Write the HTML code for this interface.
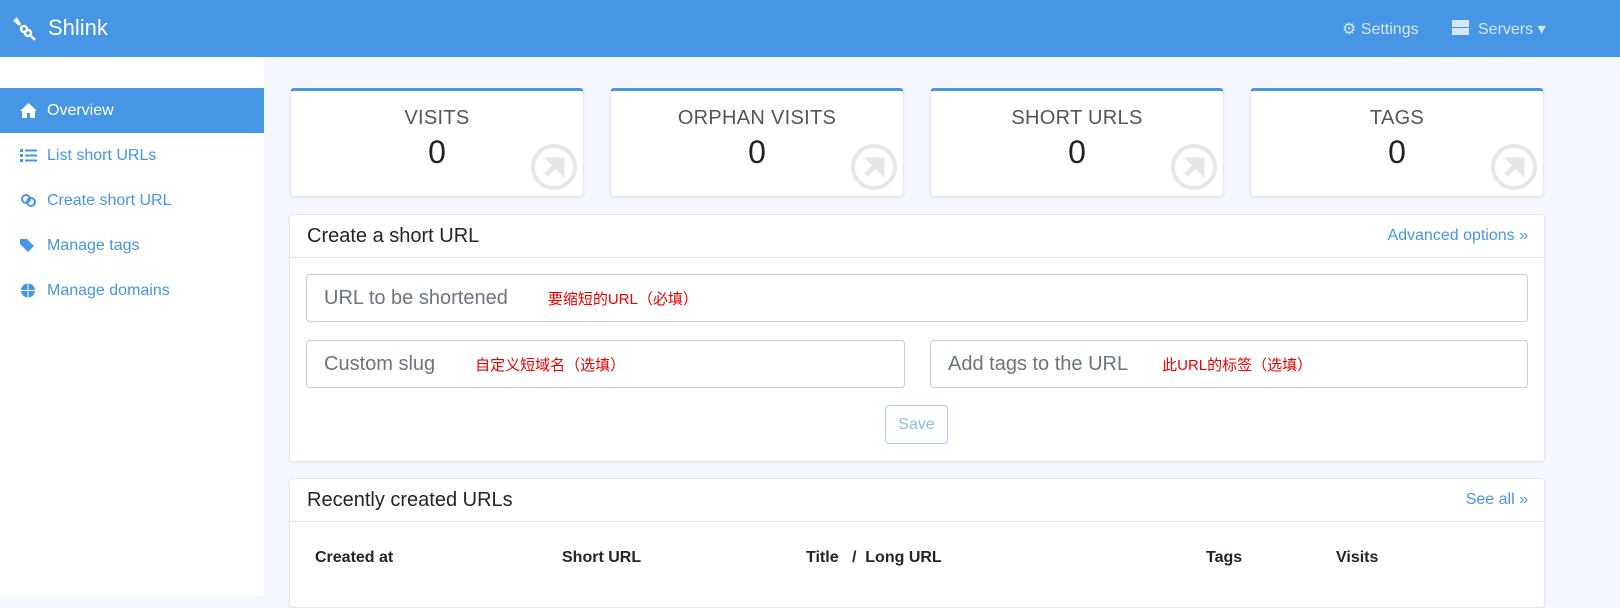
<!DOCTYPE html>
<html><head><meta charset="utf-8"><style>
*{box-sizing:border-box;margin:0;padding:0}
body{width:1620px;height:596px;overflow:hidden;background:#f5f7fe;font-family:"Liberation Sans","Noto Sans CJK SC",sans-serif;color:#212529;position:relative}
.hdr{position:absolute;left:0;top:0;width:1620px;height:57px;background:#4696e5;color:#fff}
.side{position:absolute;left:0;top:57px;width:264px;height:539px;background:#fff}
.nav{position:absolute;left:0;width:264px;height:45px;display:flex;align-items:center;padding-left:20px;font-size:16px;color:#4696e5}
.nav svg{margin-right:10px}
.nav.act{background:#4696e5;color:#fff}
.card{position:absolute;background:#fff;border:1px solid #e3e6ee;border-radius:4px;box-shadow:0 1px 2px rgba(0,0,0,.06)}
.stat{top:88px;height:109px;width:294px;border-top:3px solid #4696e5;text-align:center}
.stat .t{margin-top:16px;font-size:20px;color:#555;letter-spacing:.3px}
.stat .n{font-size:32px;margin-top:4px;color:#222}
.stat svg{position:absolute;right:5px;top:52px}
.ch{height:43px;border-bottom:1px solid #e3e6ee;display:flex;align-items:center;justify-content:space-between;padding:0 16px 0 17px;font-size:20px}
.ch a{font-size:16px;color:#4696e5}
.inp{position:absolute;border:1px solid #ccd;border-radius:4px;height:48px;display:flex;align-items:center;padding-left:17px;font-size:20px;color:#6c757d}
.inp span{color:#e00;font-size:15px;margin-left:40px}
.th{position:absolute;top:549px;font-size:16px;font-weight:bold}
</style></head><body>
<div class="hdr">
<svg style="position:absolute;left:12px;top:16px" width="26" height="26" viewBox="0 0 26 26"><g fill="none" stroke="#fff" stroke-width="2.5"><path d="M2 4l6 5M4 2l4 7"/><circle cx="12" cy="13" r="3"/><circle cx="16" cy="17" r="3"/><path d="M19 20l4 4"/></g></svg>
<div style="position:absolute;left:48px;top:15px;font-size:22px">Shlink</div>
<div style="position:absolute;left:1342px;top:19px;font-size:16px;color:#d6e6f9">⚙ Settings</div>
<div style="position:absolute;left:1452px;top:20px;width:17px;height:15px;border-top:7px solid #d6e6f9;border-bottom:7px solid #d6e6f9"></div>
<div style="position:absolute;left:1478px;top:19px;font-size:16px;color:#d6e6f9">Servers ▾</div>
</div>
<div class="side">
<div class="nav act" style="top:31px"><svg width="17" height="15" viewBox="0 0 17 15"><path d="M8.5 0L0 8h2v7h5v-5h3v5h5V8h2z" fill="#fff"/></svg>Overview</div>
<div class="nav" style="top:76px"><svg width="17" height="15" viewBox="0 0 17 15" fill="#4696e5"><rect x="0" y="1" width="3" height="3"/><rect x="5" y="1.5" width="12" height="2"/><rect x="0" y="6" width="3" height="3"/><rect x="5" y="6.5" width="12" height="2"/><rect x="0" y="11" width="3" height="3"/><rect x="5" y="11.5" width="12" height="2"/></svg>List short URLs</div>
<div class="nav" style="top:121px"><svg width="17" height="15" viewBox="0 0 17 15" fill="none" stroke="#4696e5" stroke-width="2"><circle cx="6" cy="6" r="4"/><circle cx="11" cy="9" r="4"/></svg>Create short URL</div>
<div class="nav" style="top:166px"><svg width="17" height="15" viewBox="0 0 17 15" fill="#4696e5"><path d="M0 1h7l7 7-6 6-8-8z"/></svg>Manage tags</div>
<div class="nav" style="top:211px"><svg width="17" height="15" viewBox="0 0 17 15"><circle cx="8" cy="7.5" r="7" fill="#4696e5"/><path d="M1 7.5h14M8 .5v14" stroke="#fff"/></svg>Manage domains</div>
</div>
<div class="card stat" style="left:290px"><div class="t">VISITS</div><div class="n">0</div><svg width="48" height="48"><circle cx="24" cy="24" r="21" fill="none" stroke="#e6e6e6" stroke-width="4"/><path d="M16 32l13-13M20 17h12v12z" stroke="#e6e6e6" stroke-width="5" fill="#e6e6e6"/></svg></div>
<div class="card stat" style="left:610px"><div class="t">ORPHAN VISITS</div><div class="n">0</div><svg width="48" height="48"><circle cx="24" cy="24" r="21" fill="none" stroke="#e6e6e6" stroke-width="4"/><path d="M16 32l13-13M20 17h12v12z" stroke="#e6e6e6" stroke-width="5" fill="#e6e6e6"/></svg></div>
<div class="card stat" style="left:930px"><div class="t">SHORT URLS</div><div class="n">0</div><svg width="48" height="48"><circle cx="24" cy="24" r="21" fill="none" stroke="#e6e6e6" stroke-width="4"/><path d="M16 32l13-13M20 17h12v12z" stroke="#e6e6e6" stroke-width="5" fill="#e6e6e6"/></svg></div>
<div class="card stat" style="left:1250px"><div class="t">TAGS</div><div class="n">0</div><svg width="48" height="48"><circle cx="24" cy="24" r="21" fill="none" stroke="#e6e6e6" stroke-width="4"/><path d="M16 32l13-13M20 17h12v12z" stroke="#e6e6e6" stroke-width="5" fill="#e6e6e6"/></svg></div>
<div class="card" style="left:289px;top:214px;width:1256px;height:248px"><div class="ch">Create a short URL<a>Advanced options »</a></div></div>
<div class="inp" style="left:306px;top:274px;width:1222px">URL to be shortened<span>要缩短的URL（必填）</span></div>
<div class="inp" style="left:306px;top:340px;width:599px">Custom slug<span>自定义短域名（选填）</span></div>
<div class="inp" style="left:930px;top:340px;width:598px">Add tags to the URL<span style="margin-left:34px">此URL的标签（选填）</span></div>
<div style="position:absolute;left:885px;top:405px;width:63px;height:39px;border:1px solid #a9cdf2;border-radius:4px;color:#8dbcec;font-size:16px;display:flex;align-items:center;justify-content:center">Save</div>
<div class="card" style="left:289px;top:478px;width:1256px;height:130px"><div class="ch">Recently created URLs<a>See all »</a></div></div>
<div class="th" style="left:315px">Created at</div><div class="th" style="left:562px">Short URL</div><div class="th" style="left:806px">Title &nbsp;&nbsp;/&nbsp; Long URL</div><div class="th" style="left:1206px">Tags</div><div class="th" style="left:1336px">Visits</div>
</body></html>
